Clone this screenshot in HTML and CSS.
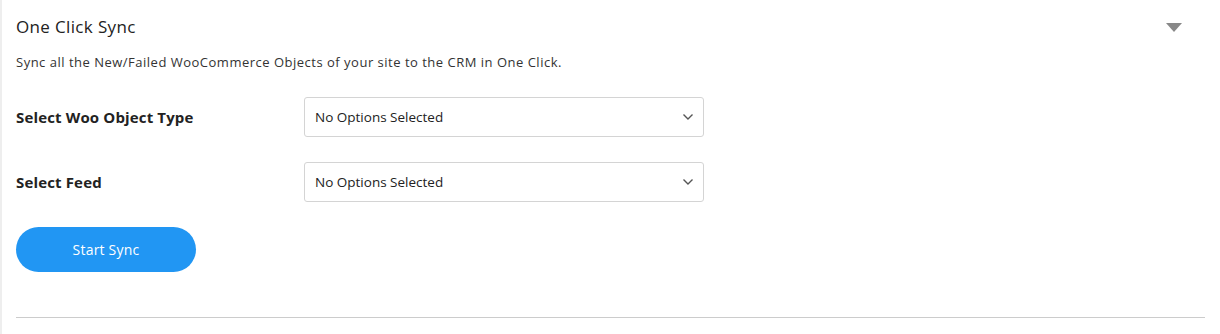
FILE: index.html
```html
<!DOCTYPE html>
<html lang="en">
   <head>
      <meta charset="UTF-8" />
      <meta name="viewport" content="width=device-width, initial-scale=1.0"/>
      <title>One Click Sync</title>
      <link rel="stylesheet" href="styles.css">
   </head>
   <body>
      <div class="panel">
         <div class="panel-head">
            <h2>One Click Sync</h2>
            <span class="toggle"></span>
         </div>
         <p class="desc">Sync all the New/Failed WooCommerce Objects of your site to the CRM in One Click.</p>
         <div class="field">
            <label for="objType">Select Woo Object Type</label>
            <div class="select-box" id="objType">
               <span>No Options Selected</span>
               <svg width="12" height="8" viewBox="0 0 12 8"><path d="M1.5 1.5 L6 6 L10.5 1.5" fill="none" stroke="#555" stroke-width="1.4"/></svg>
            </div>
         </div>
         <div class="field">
            <label for="feed">Select Feed</label>
            <div class="select-box" id="feed">
               <span>No Options Selected</span>
               <svg width="12" height="8" viewBox="0 0 12 8"><path d="M1.5 1.5 L6 6 L10.5 1.5" fill="none" stroke="#555" stroke-width="1.4"/></svg>
            </div>
         </div>
         <button class="sync-button">Start Sync</button>
         <hr class="divider" />
      </div>
   </body>
</html>
```

FILE: styles.css
```css
body {
margin: 0;
font-family: 'Open Sans', sans-serif;
background-color: #ffffff;
color: #222;
}
.panel {
border-left: 2px solid #eeeeee;
padding: 0 15px 0 14px;
height: 334px;
box-sizing: border-box;
}
.panel-head {
display: flex;
align-items: center;
justify-content: space-between;
padding-top: 14px;
height: 24px;
}
.panel-head h2 {
margin: 0;
font-size: 17px;
font-weight: 400;
letter-spacing: 0.35px;
color: #222;
}
.toggle {
width: 0;
height: 0;
border-left: 8px solid transparent;
border-right: 8px solid transparent;
border-top: 9px solid #888;
margin-right: 23px;
margin-top: 2px;
}
.desc {
margin: 15px 0 0;
font-size: 13px;
letter-spacing: 0.5px;
color: #333;
}
.field {
display: flex;
align-items: center;
margin-top: 26px;
}
.field + .field {
margin-top: 25px;
}
.field label {
width: 288px;
font-size: 15px;
font-weight: 700;
letter-spacing: 0.15px;
color: #222;
}
.select-box {
width: 400px;
height: 40px;
box-sizing: border-box;
border: 1px solid #d4d4d4;
border-radius: 3px;
display: flex;
align-items: center;
justify-content: space-between;
padding: 0 9px 0 10px;
font-size: 13.5px;
color: #222;
}
.sync-button {
display: block;
margin-top: 25px;
width: 180px;
height: 45px;
border: none;
border-radius: 23px;
background-color: #2196f3;
color: white;
font-family: inherit;
font-size: 14px;
letter-spacing: 0.2px;
cursor: pointer;
}
.divider {
margin: 45px 0 0;
border: none;
border-top: 1px solid #cccccc;
}
```
